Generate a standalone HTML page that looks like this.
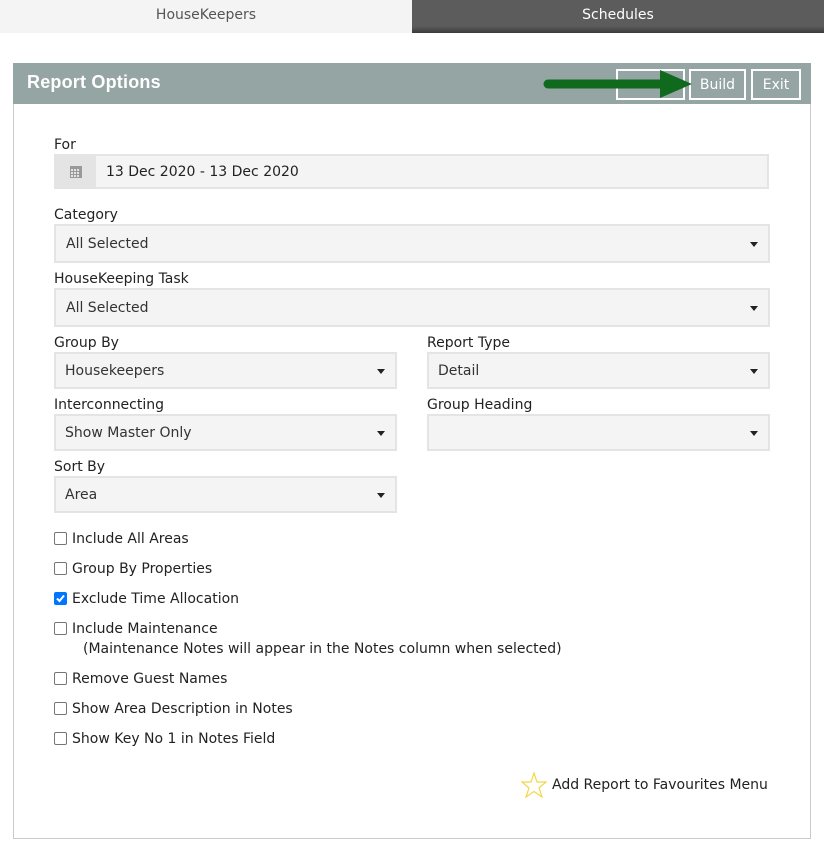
<!DOCTYPE html>
<html><head><meta charset="utf-8"><style>
*{box-sizing:border-box;margin:0;padding:0}
body{width:824px;height:851px;background:#fff;font-family:"DejaVu Sans","Liberation Sans",sans-serif;font-size:14px;color:#222;position:relative;overflow:hidden}
.a{position:absolute}
.lbl{position:absolute;left:54px;font-size:14px;color:#222}
.sel{position:absolute;background:#f4f4f4;border:2px solid #e4e4e4;padding-left:10px;display:flex;align-items:center;font-size:14px;color:#333}
.sel:after{content:"";position:absolute;right:10px;top:50%;margin-top:-2px;border-left:4px solid transparent;border-right:4px solid transparent;border-top:5px solid #222}
.sel.n:after{display:none}
.cb{position:absolute;left:54px;width:13px;height:13px;border:1px solid #767676;border-radius:2px;background:#fff}
.ct{position:absolute;left:72px;font-size:14px}
.btn{position:absolute;top:69px;height:31px;border:2px solid #fff;color:#fff;font-size:14px;display:flex;align-items:center;justify-content:center}
</style></head><body>
<div class="a" style="left:0;top:0;width:412px;height:33px;background:#f4f4f4;color:#555;font-size:14px;text-align:center;line-height:31px">HouseKeepers</div>
<div class="a" style="left:412px;top:0;width:412px;height:33px;background:linear-gradient(#5c5c5c 80%,#3a3a3a);color:#fff;font-size:14px;text-align:center;line-height:31px">Schedules</div>
<div class="a" style="left:13px;top:63px;width:798px;height:776px;border:1px solid #c6cccb"></div>
<div class="a" style="left:13px;top:63px;width:798px;height:41px;background:#95a5a3"></div>
<div class="a" style="left:27px;top:72px;color:#fff;font-size:18px;font-weight:bold;font-family:'Liberation Sans',sans-serif;letter-spacing:0.2px">Report Options</div>
<div class="btn" style="left:616px;width:69px"></div>
<div class="btn" style="left:689px;width:57px">Build</div>
<div class="btn" style="left:751px;width:50px">Exit</div>
<svg class="a" style="left:540px;top:68px" width="160" height="36"><line x1="8" y1="16" x2="125" y2="16" stroke="#0f6a1e" stroke-width="9" stroke-linecap="round"/><polygon points="120,2 152,16 120,30" fill="#0f6a1e"/></svg>
<div class="lbl" style="top:137px">For</div>
<div class="sel n" style="left:54px;top:154px;width:715px;height:35px;padding-left:0"><span style="width:40px;height:31px;background:#e4e4e4;display:flex;align-items:center;justify-content:center"><svg width="12" height="13"><rect x="0" y="1" width="12" height="12" fill="#999"/><g fill="#e4e4e4"><rect x="1" y="4" width="2" height="2"/><rect x="4" y="4" width="2" height="2"/><rect x="7" y="4" width="2" height="2"/><rect x="1" y="7" width="2" height="2"/><rect x="4" y="7" width="2" height="2"/><rect x="7" y="7" width="2" height="2"/><rect x="1" y="10" width="2" height="2"/><rect x="4" y="10" width="2" height="2"/><rect x="7" y="10" width="2" height="2"/></g></svg></span><span style="margin-left:10px;color:#222">13 Dec 2020 - 13 Dec 2020</span></div>
<div class="lbl" style="top:207px">Category</div>
<div class="sel" style="left:54px;top:224px;width:716px;height:39px">All Selected</div>
<div class="lbl" style="top:271px">HouseKeeping Task</div>
<div class="sel" style="left:54px;top:288px;width:716px;height:39px">All Selected</div>
<div class="lbl" style="top:335px">Group By</div>
<div class="lbl" style="top:335px;left:427px">Report Type</div>
<div class="sel" style="left:54px;top:352px;width:343px;height:37px;padding-left:9px">Housekeepers</div>
<div class="sel" style="left:427px;top:352px;width:343px;height:37px;padding-left:9px">Detail</div>
<div class="lbl" style="top:397px">Interconnecting</div>
<div class="lbl" style="top:397px;left:427px">Group Heading</div>
<div class="sel" style="left:54px;top:414px;width:343px;height:37px;padding-left:9px">Show Master Only</div>
<div class="sel" style="left:427px;top:414px;width:343px;height:37px"></div>
<div class="lbl" style="top:459px">Sort By</div>
<div class="sel" style="left:54px;top:476px;width:343px;height:37px;padding-left:9px">Area</div>
<div class="cb" style="top:532px"></div><div class="ct" style="top:531px">Include All Areas</div>
<div class="cb" style="top:562px"></div><div class="ct" style="top:561px">Group By Properties</div>
<div class="cb" style="top:592px;background:#0075ff;border-color:#0075ff"><svg width="11" height="11" style="position:absolute;left:0;top:0"><path d="M2 5.5 L4.5 8 L9 2.5" stroke="#fff" stroke-width="2" fill="none"/></svg></div><div class="ct" style="top:591px">Exclude Time Allocation</div>
<div class="cb" style="top:622px"></div><div class="ct" style="top:621px">Include Maintenance</div>
<div class="ct" style="top:641px;left:83px">(Maintenance Notes will appear in the Notes column when selected)</div>
<div class="cb" style="top:672px"></div><div class="ct" style="top:671px">Remove Guest Names</div>
<div class="cb" style="top:702px"></div><div class="ct" style="top:701px">Show Area Description in Notes</div>
<div class="cb" style="top:732px"></div><div class="ct" style="top:731px">Show Key No 1 in Notes Field</div>
<svg class="a" style="left:521px;top:772px" width="26" height="26"><polygon points="13,1 16,10 25,10 18,16 21,25 13,19.5 5,25 8,16 1,10 10,10" fill="none" stroke="#f0d84a" stroke-width="1.2"/></svg>
<div class="a" style="left:552px;top:777px;font-size:14px">Add Report to Favourites Menu</div>
</body></html>
